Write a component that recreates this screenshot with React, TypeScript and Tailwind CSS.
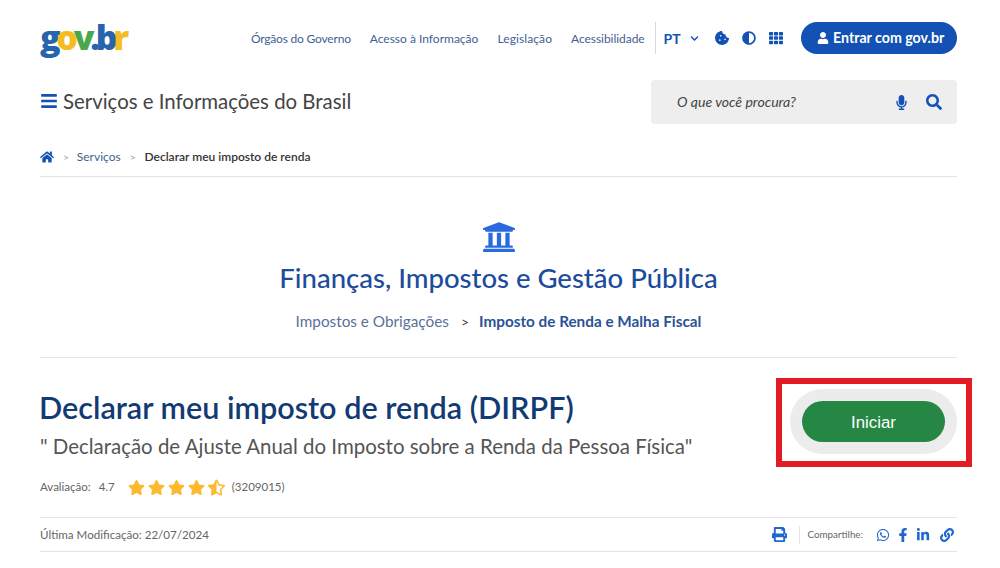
import React from "react";
import {
  FaHome, FaBars, FaCookieBite, FaAdjust, FaTh, FaUser, FaMicrophone, FaSearch, FaUniversity,
  FaStar, FaStarHalfAlt, FaPrint, FaWhatsapp, FaFacebookF, FaLinkedinIn, FaLink, FaChevronDown,
} from "react-icons/fa";

const font = "font-['Lato','Noto_Sans',sans-serif]";

export default function App() {
  return (
    <div className={`${font} relative w-[1000px] h-[568px] overflow-hidden bg-white pl-10 pr-[43px] text-[#333]`}>
      {/* Top bar */}
      <div className="flex items-center h-[32px] mt-[22px] whitespace-nowrap">
        <div className="font-['Open_Sans',sans-serif] font-extrabold text-[34px] leading-[32px] tracking-[-4.3px] w-[196px] shrink-0 -mt-[2px]">
          <span className="text-[#2864ae]">g</span>
          <span className="text-[#f5bd23]">o</span>
          <span className="text-[#4ba84a]">v</span>
          <span className="text-[#2864ae]">.b</span>
          <span className="text-[#f5bd23]">r</span>
        </div>
        <div className="flex items-center gap-[19px] ml-[15px] mt-[1px] text-[12px] text-[#3f5f94]">
          <span className="tracking-[-0.2px]">Órgãos do Governo</span>
          <span>Acesso à Informação</span>
          <span className="tracking-[0.1px]">Legislação</span>
          <span className="tracking-[-0.05px]">Acessibilidade</span>
        </div>
        <div className="w-px h-[32px] bg-[#d8d8d8] ml-[10px]" />
        <span className="ml-[8px] text-[14px] font-bold text-[#1351b4]">PT</span>
        <FaChevronDown className="ml-[9px] text-[#1351b4]" size={9} />
        <FaCookieBite className="ml-[16px] text-[#1351b4]" size={14} />
        <FaAdjust className="ml-[13px] text-[#1351b4]" size={14} />
        <FaTh className="ml-[13px] text-[#1351b4]" size={14} />
        <div className="ml-auto flex items-center gap-[4px] w-[156px] shrink-0 h-[32px] pl-[16px] rounded-full bg-[#1351b4] text-white font-bold text-[14.2px]">
          <FaUser size={12} />
          <span>Entrar com gov.br</span>
        </div>
      </div>

      {/* Second row */}
      <div className="flex items-center justify-between mt-[26px] h-[44px]">
        <div className="flex items-center gap-[5px] -mt-[1px]">
          <FaBars className="text-[#1351b4]" size={18} />
          <span className="text-[20.4px] text-[#444]">Serviços e Informações do Brasil</span>
        </div>
        <div className="flex items-center w-[306px] h-[44px] rounded bg-[#eeeeee] pl-[26px] pr-[15px]">
          <span className="flex-1 italic text-[14.1px] text-[#444]">O que você procura?</span>
          <FaMicrophone className="text-[#1351b4]" size={15} />
          <FaSearch className="ml-[17px] text-[#1351b4]" size={16} />
        </div>
      </div>

      {/* Breadcrumb */}
      <div className="flex items-center h-[20px] mt-[23px] text-[12px]">
        <FaHome className="text-[#1351b4]" size={14} />
        <span className="ml-[9px] text-[#999] text-[10px]">&gt;</span>
        <span className="ml-[8px] text-[#3f5f94]">Serviços</span>
        <span className="ml-[9px] text-[#999] text-[10px]">&gt;</span>
        <span className="ml-[9px] font-semibold text-[#333]">Declarar meu imposto de renda</span>
      </div>
      <div className="h-px bg-[#e4e4e4] mt-[9px]" />

      {/* Category */}
      <div className="flex flex-col items-center">
        <FaUniversity className="text-[#2a6adf] mt-[43px]" size={34} />
        <h2 className="mt-[6px] text-[27.5px] leading-[36px] font-medium text-[#1c4c9c]">Finanças, Impostos e Gestão Pública</h2>
        <div className="flex items-center mt-[15px] h-[20px] text-[15.3px]">
          <span className="text-[#5c7199]">Impostos e Obrigações</span>
          <span className="ml-[12px] mr-[10px] text-[#444] text-[14px]">&gt;</span>
          <span className="font-bold text-[#2a5396]">Imposto de Renda e Malha Fiscal</span>
        </div>
      </div>
      <div className="h-px bg-[#e4e4e4] mt-[26px]" />

      {/* Service title */}
      <div className="flex justify-between">
        <div>
          <h1 className="mt-[32px] -ml-[1px] text-[30.6px] leading-[36px] font-semibold text-[#123a73]">Declarar meu imposto de renda (DIRPF)</h1>
          <p className="mt-[7px] text-[20.45px] leading-[26px] text-[#555]">" Declaração de Ajuste Anual do Imposto sobre a Renda da Pessoa Física"</p>
          <div className="flex items-center mt-[16px] h-[24px] text-[11.5px] text-[#666]">
            <span>Avaliação:</span>
            <span className="ml-[8px]">4.7</span>
            <div className="ml-[13px] flex items-center gap-[3px] text-[#fdb92f]">
              <FaStar size={17} /><FaStar size={17} /><FaStar size={17} /><FaStar size={17} /><FaStarHalfAlt size={17} />
            </div>
            <span className="ml-[7px]">(3209015)</span>
          </div>
        </div>
        <div className="flex items-center justify-center w-[167px] h-[65px] mt-[31px] rounded-full bg-[#ececec]">
          <div className="flex items-center justify-center w-[143px] h-[41px] pt-[3px] rounded-full bg-[#268744] text-white font-['Liberation_Sans',sans-serif] text-[16.8px]">
            Iniciar
          </div>
        </div>
      </div>

      {/* Footer strip */}
      <div className="flex items-center justify-between h-[35px] mt-[18px] border-y border-[#e4e4e4] text-[11.6px] text-[#666]">
        <span>Última Modificação: 22/07/2024</span>
        <div className="flex items-center pr-[3px] text-[#1f66d1]">
          <FaPrint size={15} />
          <div className="w-px h-[18px] bg-[#e4e4e4] ml-[12px]" />
          <span className="ml-[8px] text-[9.8px] text-[#666]">Compartilhe:</span>
          <FaWhatsapp className="ml-[13px]" size={14} />
          <FaFacebookF className="ml-[6px]" size={14} />
          <FaLinkedinIn className="ml-[6px]" size={14} />
          <FaLink className="ml-[10px]" size={14} />
        </div>
      </div>

      {/* Red annotation */}
      <div className="absolute left-[776px] top-[378px] w-[196px] h-[89px] border-[6px] border-[#e31b23]" />
    </div>
  );
}
